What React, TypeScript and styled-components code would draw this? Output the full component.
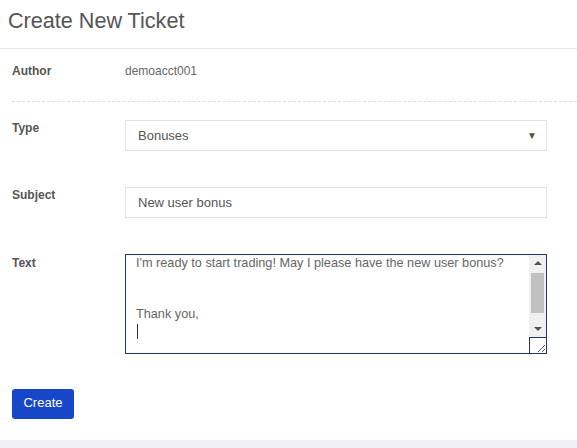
import React from "react";
import styled, { createGlobalStyle } from "styled-components";

const GlobalStyle = createGlobalStyle`
  html, body {
    margin: 0;
    padding: 0;
    background: #f1f1f5;
    font-family: "Liberation Sans", Arial, sans-serif;
  }
  * {
    box-sizing: border-box;
  }
`;

const Card = styled.div`
  width: 577px;
  height: 440px;
  background: #fff;
`;

const Header = styled.div`
  height: 49px;
  padding: 0 8px;
  border-bottom: 1px solid #e6e6e6;
`;

const Title = styled.h1`
  margin: 0;
  font-size: 21.6px;
  line-height: 42px;
  font-weight: normal;
  color: #555;
`;

const Form = styled.div`
  padding-left: 12px;
`;

const Row = styled.div<{ $divider?: boolean; $top?: number }>`
  display: grid;
  grid-template-columns: 113px 422px;
  margin-top: ${(p) => p.$top ?? 0}px;
  ${(p) =>
    p.$divider &&
    `
    padding: 14px 0 22px;
    border-bottom: 1px dashed #dedede;
  `}
`;

const Label = styled.div<{ $offset?: number }>`
  margin-top: ${(p) => p.$offset ?? 0}px;
  font-size: 12px;
  line-height: 16px;
  font-weight: bold;
  color: #555;
`;

const Value = styled.div`
  font-size: 12px;
  line-height: 16px;
  color: #666;
`;

const Field = styled.div`
  height: 31px;
  border: 1px solid #e2e2e2;
  padding: 0 12px;
  display: flex;
  align-items: center;
  justify-content: space-between;
  font-size: 13px;
  color: #555;
`;

const Caret = styled.span`
  font-size: 10px;
  color: #555;
  margin-right: -3px;
`;

const TextBox = styled.div`
  height: 100px;
  border: 1px solid #1f3a68;
  display: flex;
`;

const TextContent = styled.div`
  flex: 1;
  padding: 0 10px;
  font-size: 12.7px;
  line-height: 17px;
  color: #666;
  overflow: hidden;
`;

const Line = styled.div`
  height: 17px;
  white-space: nowrap;
`;

const Cursor = styled.span`
  display: inline-block;
  width: 1px;
  height: 15px;
  margin-left: 1px;
  background: #333;
  vertical-align: middle;
`;

const ScrollBar = styled.div`
  width: 17px;
  display: flex;
  flex-direction: column;
`;

const ScrollArea = styled.div`
  flex: 1;
  background: #f0f0f0;
  display: flex;
  flex-direction: column;
  align-items: center;
`;

const Arrow = styled.div<{ $down?: boolean }>`
  height: 16px;
  width: 100%;
  display: flex;
  align-items: center;
  justify-content: center;
  &::after {
    content: "";
    border-left: 4px solid transparent;
    border-right: 4px solid transparent;
    ${(p) =>
      p.$down ? "border-top: 4px solid #505050;" : "border-bottom: 4px solid #505050;"}
  }
`;

const Track = styled.div`
  flex: 1;
  width: 100%;
  padding: 2px 2px 4px;
`;

const Thumb = styled.div`
  width: 100%;
  height: 40px;
  background: #c1c1c1;
`;

const Resizer = styled.div`
  height: 16px;
  border: 1px solid #1f3a68;
  border-right: none;
  border-bottom: none;
  background: #fff;
  display: flex;
  align-items: flex-end;
  justify-content: flex-end;
`;

const SubmitButton = styled.button`
  margin-top: 35px;
  width: 62px;
  height: 30px;
  border: none;
  border-radius: 3px;
  background: #1846c9;
  color: #fff;
  font-family: "Liberation Sans", Arial, sans-serif;
  font-size: 13px;
  line-height: 28px;
  padding: 0 0 2px;
`;

const App: React.FC = () => {
  return (
    <>
      <GlobalStyle />
      <Card>
        <Header>
          <Title>Create New Ticket</Title>
        </Header>
        <Form>
          <Row $divider>
            <Label>Author</Label>
            <Value>demoacct001</Value>
          </Row>
          <Row $top={18}>
            <Label>Type</Label>
            <Field>
              <span>Bonuses</span>
              <Caret>▼</Caret>
            </Field>
          </Row>
          <Row $top={36}>
            <Label>Subject</Label>
            <Field>New user bonus</Field>
          </Row>
          <Row $top={36}>
            <Label $offset={1}>Text</Label>
            <TextBox>
              <TextContent>
                <Line>I'm ready to start trading! May I please have the new user bonus?</Line>
                <Line />
                <Line />
                <Line>Thank you,</Line>
                <Line>
                  <Cursor />
                </Line>
              </TextContent>
              <ScrollBar>
                <ScrollArea>
                  <Arrow />
                  <Track>
                    <Thumb />
                  </Track>
                  <Arrow $down />
                </ScrollArea>
                <Resizer>
                  <svg width="12" height="12" viewBox="0 0 12 12">
                    <path d="M11 4 L4 11 M11 8 L8 11" stroke="#555" strokeWidth="1" />
                  </svg>
                </Resizer>
              </ScrollBar>
            </TextBox>
          </Row>
          <SubmitButton>Create</SubmitButton>
        </Form>
      </Card>
    </>
  );
};

export default App;
